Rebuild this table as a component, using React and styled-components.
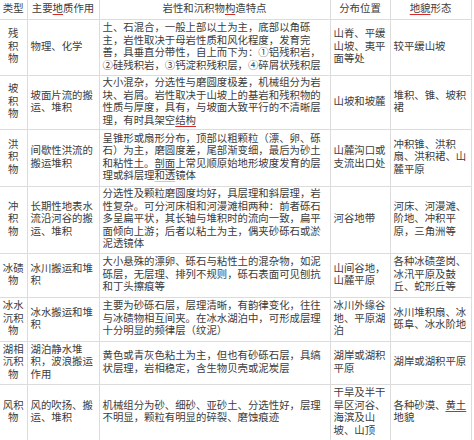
import React from 'react';
import styled, { createGlobalStyle } from 'styled-components';

const Global = createGlobalStyle`
  html, body { margin: 0; padding: 0; background: #ffffff; }
  body { font-family: "Liberation Sans", "Noto Sans CJK SC", sans-serif; }
`;

const Table = styled.table`
  border-collapse: collapse;
  table-layout: fixed;
  width: 471px;
  font-family: "Liberation Sans", "Noto Sans CJK SC", sans-serif;
  font-size: 10.4px;
  line-height: 12.5px;
  color: #3c3c3c;
`;

const Row = styled.tr`
  height: ${(p) => p.$h}px;
`;

const HeadCell = styled.th`
  border: 1px solid #dcdcdc;
  border-top: none;
  padding: 0 2px;
  font-weight: 400;
  text-align: center;
  vertical-align: middle;
  white-space: nowrap;
  &:first-child { border-left: none; }
`;

const Cell = styled.td`
  border: 1px solid #dcdcdc;
  padding: 0 3px;
  vertical-align: middle;
  text-align: ${(p) => (p.$center ? 'center' : 'left')};
  white-space: nowrap;
  &:first-child { border-left: none; padding: 0 1px; }
`;

const Line = styled.span`
  display: block;
  height: 12.5px;
`;

const Mark = styled.span`
  text-decoration: underline;
  text-decoration-color: ${(p) => (p.$faint ? '#f0b8b8' : '#d42a2a')};
  text-decoration-thickness: 1px;
  text-underline-offset: 2px;
`;

const rows = [
  {
    h: 56,
    type: ['残', '积', '物'],
    agent: ['物理、化学'],
    feat: [
      '土、石混合，一般上部以土为主，底部以角砾',
      '主，岩性取决于母岩性质和风化程度，发育完',
      '善，具垂直分带性，自上而下为：①铝残积岩，',
      '②硅残积岩，③钙淀积残积层，④碎屑状残积层',
    ],
    loc: ['山脊、平缓', '山坡、夷平', '面等处'],
    form: ['较平缓山坡'],
  },
  {
    h: 54,
    type: ['坡', '积', '物'],
    agent: ['坡面片流的搬', '运、堆积'],
    feat: [
      '大小混杂，分选性与磨圆度极差，机械组分为岩',
      '块、岩屑。岩性取决于山坡上的基岩和残积物的',
      '性质与厚度，具有，与坡面大致平行的不清晰层',
      <>理，有时具架空<Mark>结构</Mark></>,
    ],
    loc: ['山坡和坡麓'],
    form: ['堆积、锥、坡积', '裙'],
  },
  {
    h: 57,
    type: ['洪', '积', '物'],
    agent: ['间歇性洪流的', '搬运堆积'],
    feat: [
      '呈锥形或扇形分布，顶部以粗颗粒（漂、卵、砾',
      '石）为主，磨圆度差，尾部渐变细，最后为砂土',
      <>和粘性土。<Mark>剖面</Mark>上常见顺原始地形坡度发育的层</>,
      <>理或斜层理<Mark $faint>和透</Mark>镜体</>,
    ],
    loc: ['山麓沟口或', '支流出口处'],
    form: ['冲积锥、洪积', '扇、洪积裙、山', '麓平原'],
  },
  {
    h: 67,
    type: ['冲', '积', '物'],
    agent: ['长期性地表水', '流沿河谷的搬', '运、堆积'],
    feat: [
      '分选性及颗粒磨圆度均好，具层理和斜层理，岩',
      '性复杂。可分河床相和河漫滩相两种：前者砾石',
      '多呈扁平状，其长轴与堆积时的流向一致，扁平',
      '面倾向上游；后者以粘土为主，偶夹砂砾石或淤',
      '泥透镜体',
    ],
    loc: ['河谷地带'],
    form: ['河床、河漫滩、', '阶地、冲积平', '原，三角洲等'],
  },
  {
    h: 44,
    type: ['冰碛', '物'],
    agent: ['冰川搬运和堆', '积'],
    feat: [
      '大小悬殊的漂卵、砾石与粘性土的混杂物，如泥',
      '砾层，无层理、排列不规则，砾石表面可见刨抗',
      '和丁头擦痕等',
    ],
    loc: ['山间谷地，', '山麓平原'],
    form: ['各种冰碛垄岗、', '冰汛平原及鼓', '丘、蛇形丘等'],
  },
  {
    h: 44,
    type: ['冰水', '沉积', '物'],
    agent: ['冰水搬运和堆', '积'],
    feat: [
      '主要为砂砾石层，层理清晰，有韵律变化，往往',
      '与冰碛物相互间夹。在冰水湖泊中，可形成层理',
      '十分明显的频律层（纹泥）',
    ],
    loc: ['冰川外缘谷', '地、平原湖', '泊'],
    form: ['冰川堆积扇、冰', '砾阜、冰水阶地'],
  },
  {
    h: 43,
    type: ['湖相', '沉积', '物'],
    agent: ['湖泊静水堆', '积，波浪搬运', '作用'],
    feat: [
      '黄色或青灰色粘土为主，但也有砂砾石层，具缟',
      '状层理，岩相稳定，含生物贝壳或泥炭层',
    ],
    loc: ['湖岸或湖积', '平原'],
    form: ['湖岸或湖积平原'],
  },
  {
    h: 56,
    type: ['风积', '物'],
    agent: ['风的吹扬、搬', '运、堆积'],
    feat: [
      '机械组分为砂、细砂、亚砂土、分选性好，层理',
      '不明显，颗粒有明显的碎裂、磨蚀痕迹',
    ],
    loc: ['干旱及半干', '旱区河谷、', '海滨及山', '坡、山顶'],
    form: [<>各种砂漠、<Mark>黄土</Mark></>, '地貌'],
  },
];

const Lines = ({ items }) => items.map((t, i) => <Line key={i}>{t}</Line>);

export default function App() {
  return (
    <>
      <Global />
      <Table>
        <colgroup>
          <col style={{ width: 27 }} />
          <col style={{ width: 72 }} />
          <col style={{ width: 231 }} />
          <col style={{ width: 60 }} />
          <col style={{ width: 81 }} />
        </colgroup>
        <thead>
          <Row $h={19}>
            <HeadCell>类型</HeadCell>
            <HeadCell>主要<Mark>地</Mark>质作用</HeadCell>
            <HeadCell>岩性和沉积物<Mark>构</Mark>造特点</HeadCell>
            <HeadCell>分布位置</HeadCell>
            <HeadCell><Mark>地貌</Mark>形态</HeadCell>
          </Row>
        </thead>
        <tbody>
          {rows.map((r, i) => (
            <Row key={i} $h={r.h}>
              <Cell $center><Lines items={r.type} /></Cell>
              <Cell><Lines items={r.agent} /></Cell>
              <Cell><Lines items={r.feat} /></Cell>
              <Cell><Lines items={r.loc} /></Cell>
              <Cell><Lines items={r.form} /></Cell>
            </Row>
          ))}
        </tbody>
      </Table>
    </>
  );
}
